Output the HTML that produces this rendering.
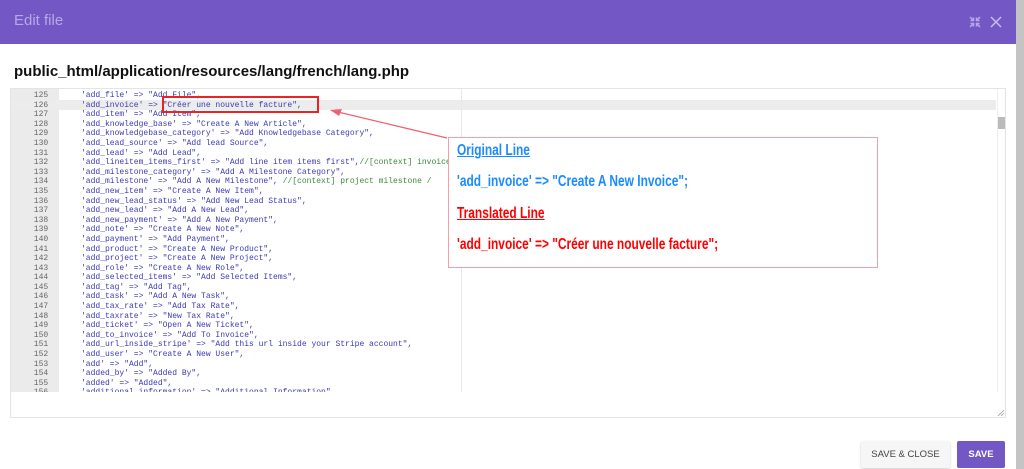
<!DOCTYPE html>
<html><head><meta charset="utf-8"><style>
*{margin:0;padding:0;box-sizing:border-box}
body{width:1024px;height:469px;overflow:hidden;background:#fff;font-family:"Liberation Sans",sans-serif;position:relative}
.strip{position:absolute;left:1016px;top:0;width:8px;height:469px;background:#c4c4c4}
.hdr{position:absolute;left:0;top:0;width:1016px;height:44px;background:#7257c5}
.hdr .t{position:absolute;left:14px;top:12px;font-size:15px;color:#b7a8e8}
.fn{position:absolute;left:14px;top:63px;font-size:15px;font-weight:bold;color:#111}
.ed{position:absolute;left:10px;top:88px;width:996px;height:330px;border:1px solid #e4e4e4;background:#fff}
.in{position:absolute;left:0;top:0;width:994px;height:303px;overflow:hidden}
.gut{position:absolute;left:0;top:0;width:48px;height:100%;background:#ebebeb}
.pm{position:absolute;left:450px;top:0;width:1px;height:100%;background:#e8e8e8}
.hl{position:absolute;left:0;top:11px;width:985px;height:10px;background:#ececec}
.lines{position:absolute;left:0;top:2px;font-family:"Liberation Mono",monospace;font-size:8px;line-height:9.6px;white-space:pre}
.ln{position:absolute;left:0;width:60px;text-align:center;color:#666}
.cd{position:absolute;left:70px;color:#3b3bb3}
.c{color:#3a8a3a}
.sb{position:absolute;left:986px;top:0;width:9px;height:100%;border-left:1px solid #eee}
.th{position:absolute;left:987px;top:28px;width:7px;height:12px;background:#bbb}
.rb{position:absolute;left:162px;top:96px;width:157px;height:17px;border:2px solid #e22}
.box{position:absolute;left:448px;top:137px;width:430px;height:131px;border:1px solid #f5a0a8;background:#fff;font-weight:bold;font-size:15.5px}
.box div{position:absolute;left:8px;transform:scaleX(0.77);transform-origin:0 0;white-space:nowrap}
.b1{color:#1a8cff}.b2{color:#f00}
.btn1{position:absolute;left:861px;top:441px;width:89px;height:27px;background:#f6f6f6;border-radius:2px;box-shadow:0 1px 2px rgba(0,0,0,.2);font-size:9.5px;color:#444;text-align:center;line-height:27px}
.btn2{position:absolute;left:957px;top:441px;width:48px;height:27px;background:#7257c5;border-radius:2px;font-size:9.5px;color:#fff;font-weight:bold;text-align:center;line-height:27px}
</style></head><body>
<div class="strip"></div>
<div class="hdr"><div class="t">Edit file</div>
<svg style="position:absolute;left:969px;top:16px" width="12" height="12" viewBox="0 0 12 12" stroke="#b7a8e8" stroke-width="1.5" fill="none"><path d="M1 1l3.5 3.5M4.5 1.5v3h-3M11 1L7.5 4.5M7.5 1.5v3h3M1 11l3.5-3.5M1.5 7.5h3v3M11 11L7.5 7.5M10.5 7.5h-3v3"/></svg>
<svg style="position:absolute;left:990px;top:16px" width="12" height="12" viewBox="0 0 12 12" stroke="#c9bdf0" stroke-width="1.5"><path d="M1 1l10 10M11 1L1 11"/></svg>
</div>
<div class="fn">public_html/application/resources/lang/french/lang.php</div>
<div class="ed"><div class="in">
<div class="gut"></div>
<div class="hl"></div>
<div class="pm"></div>
<div class="lines">
<div class="ln" style="top:0">125
126
127
128
129
130
131
132
133
134
135
136
137
138
139
140
141
142
143
144
145
146
147
148
149
150
151
152
153
154
155
156</div>
<div class="cd" style="top:0">'add_file' =&gt; "Add File",
'add_invoice' =&gt; "Créer une nouvelle facture",
'add_item' =&gt; "Add Item",
'add_knowledge_base' =&gt; "Create A New Article",
'add_knowledgebase_category' =&gt; "Add Knowledgebase Category",
'add_lead_source' =&gt; "Add lead Source",
'add_lead' =&gt; "Add Lead",
'add_lineitem_items_first' =&gt; "Add line item items first",<span class="c">//[context] invoice</span>
'add_milestone_category' =&gt; "Add A Milestone Category",
'add_milestone' =&gt; "Add A New Milestone", <span class="c">//[context] project milestone / </span>
'add_new_item' =&gt; "Create A New Item",
'add_new_lead_status' =&gt; "Add New Lead Status",
'add_new_lead' =&gt; "Add A New Lead",
'add_new_payment' =&gt; "Add A New Payment",
'add_note' =&gt; "Create A New Note",
'add_payment' =&gt; "Add Payment",
'add_product' =&gt; "Create A New Product",
'add_project' =&gt; "Create A New Project",
'add_role' =&gt; "Create A New Role",
'add_selected_items' =&gt; "Add Selected Items",
'add_tag' =&gt; "Add Tag",
'add_task' =&gt; "Add A New Task",
'add_tax_rate' =&gt; "Add Tax Rate",
'add_taxrate' =&gt; "New Tax Rate",
'add_ticket' =&gt; "Open A New Ticket",
'add_to_invoice' =&gt; "Add To Invoice",
'add_url_inside_stripe' =&gt; "Add this url inside your Stripe account",
'add_user' =&gt; "Create A New User",
'add' =&gt; "Add",
'added_by' =&gt; "Added By",
'added' =&gt; "Added",
'additional_information' =&gt; "Additional Information",</div>
</div>
<div class="sb"></div><div class="th"></div>
</div>
<svg style="position:absolute;left:986px;top:320px" width="8" height="8" stroke="#999" stroke-width="0.8"><path d="M1 7L7 1M4 7L7 4"/></svg>
</div>
<div class="rb"></div>
<svg style="position:absolute;left:320px;top:100px" width="130" height="40"><path d="M127 38L18 12" stroke="#f06070" stroke-width="1.3"/><path d="M10 10l12 -1l-3 7z" fill="#f06070"/></svg>
<div class="box">
<div class="b1" style="top:4px;text-decoration:underline">Original Line</div>
<div class="b1" style="top:35px">'add_invoice' =&gt; "Create A New Invoice";</div>
<div class="b2" style="top:67px;text-decoration:underline">Translated Line</div>
<div class="b2" style="top:98px">'add_invoice' =&gt; "Créer une nouvelle facture";</div>
</div>
<div class="btn1">SAVE &amp; CLOSE</div>
<div class="btn2">SAVE</div>
</body></html>
